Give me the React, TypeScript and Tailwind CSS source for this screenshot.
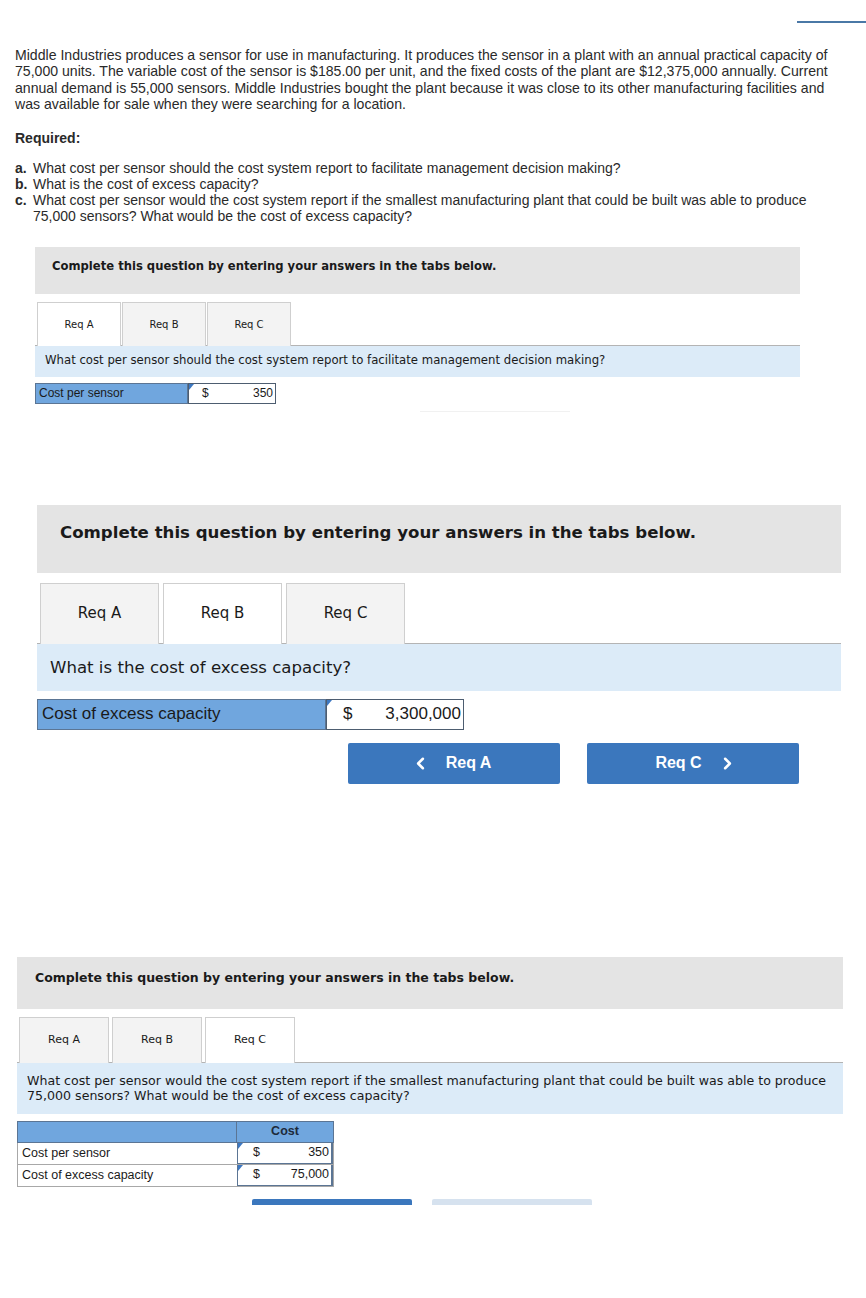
import { ChevronLeft, ChevronRight } from "lucide-react";

const sans = "font-['Liberation_Sans',Arial,sans-serif]";
const verdana = "font-['DejaVu_Sans',Verdana,sans-serif]";

function Marker() {
  return (
    <span className="absolute left-0 top-0 h-0 w-0 border-t-[6px] border-r-[5px] border-t-[#3d78c2] border-r-transparent" />
  );
}

function BlockA() {
  return (
    <section className={`ml-[35px] mt-[23px] w-[765px] ${verdana} text-[#1a1a1a]`}>
      <div className="flex h-[47px] items-center bg-[#e4e4e4] pb-[6px] pl-[17px] text-[11.6px] font-bold">
        Complete this question by entering your answers in the tabs below.
      </div>
      <div className="mt-[8px] flex gap-px border-b border-[#b4b4b4] pl-[2px]">
        {["Req A", "Req B", "Req C"].map((t, i) => (
          <div
            key={t}
            className={`-mb-px flex h-[44px] w-[84px] items-center justify-center border border-b-0 border-[#cfcfcf] text-[10px] ${
              i === 0 ? "bg-white" : "bg-[#f3f3f3]"
            }`}
          >
            {t}
          </div>
        ))}
      </div>
      <div className="flex h-[31px] items-center bg-[#dcebf8] pl-[10px] text-[11.7px]">
        What cost per sensor should the cost system report to facilitate management decision making?
      </div>
      <div className={`mt-[6px] flex h-[21px] w-[241px] ${sans} text-[12px]`}>
        <div className="flex w-[153px] items-center border border-[#5b7594] bg-[#70a6de] pl-[3px]">Cost per sensor</div>
        <div className="relative flex w-[88px] items-center justify-between border border-[#4d5d70] bg-white pl-[13px] pr-[2px]">
          <Marker />
          <span>$</span>
          <span>350</span>
        </div>
      </div>
      <div className="ml-[385px] mt-[7px] h-px w-[150px] bg-[#f1f1f1]" />
    </section>
  );
}

function BlockB() {
  return (
    <section className={`ml-[37px] mt-[93px] w-[804px] ${verdana} text-[#1a1a1a]`}>
      <div className="flex h-[68px] items-center bg-[#e4e4e4] pb-[10px] pl-[23px] text-[16.6px] font-bold">
        Complete this question by entering your answers in the tabs below.
      </div>
      <div className="mt-[10px] flex gap-[4px] border-b border-[#b4b4b4] pl-[3px]">
        {["Req A", "Req B", "Req C"].map((t, i) => (
          <div
            key={t}
            className={`-mb-px flex h-[61px] w-[119px] items-center justify-center border border-b-0 border-[#cfcfcf] text-[15px] ${
              i === 1 ? "bg-white" : "bg-[#f3f3f3]"
            }`}
          >
            {t}
          </div>
        ))}
      </div>
      <div className="flex h-[47px] items-center bg-[#dcebf8] pl-[13px] pt-[2px] text-[16.6px]">
        What is the cost of excess capacity?
      </div>
      <div className={`mt-[8px] flex h-[31px] w-[427px] ${sans} text-[17px]`}>
        <div className="flex w-[289px] items-center border border-[#5b7594] bg-[#70a6de] pl-[4px]">Cost of excess capacity</div>
        <div className="relative flex w-[138px] items-center justify-between border border-[#4d5d70] bg-white pl-[16px] pr-[2px]">
          <Marker />
          <span>$</span>
          <span>3,300,000</span>
        </div>
      </div>
      <div className={`mt-[13px] flex gap-[27px] pl-[311px] ${sans}`}>
        <button className="flex h-[41px] w-[212px] items-center justify-center gap-[16px] rounded-[2px] bg-[#3b77bd] pr-[6px] text-[16px] font-bold text-white">
          <ChevronLeft size={19} strokeWidth={3.2} />
          Req A
        </button>
        <button className="flex h-[41px] w-[212px] items-center justify-center gap-[16px] rounded-[2px] bg-[#3b77bd] pl-[6px] text-[16px] font-bold text-white">
          Req C
          <ChevronRight size={19} strokeWidth={3.2} />
        </button>
      </div>
    </section>
  );
}

function BlockC() {
  return (
    <section className={`ml-[17px] mt-[173px] w-[826px] ${verdana} text-[#1a1a1a]`}>
      <div className="flex h-[52px] items-center bg-[#e4e4e4] pb-[8px] pl-[18px] text-[12.5px] font-bold">
        Complete this question by entering your answers in the tabs below.
      </div>
      <div className="mt-[8px] flex gap-[3px] border-b border-[#b4b4b4] pl-[2px]">
        {["Req A", "Req B", "Req C"].map((t, i) => (
          <div
            key={t}
            className={`-mb-px flex h-[46px] w-[90px] items-center justify-center border border-b-0 border-[#cfcfcf] text-[11px] ${
              i === 2 ? "bg-white" : "bg-[#f3f3f3]"
            }`}
          >
            {t}
          </div>
        ))}
      </div>
      <div className="flex h-[51px] flex-col justify-center bg-[#dcebf8] pl-[10px] text-[12.6px] leading-[15px]">
        <p>What cost per sensor would the cost system report if the smallest manufacturing plant that could be built was able to produce</p>
        <p>75,000 sensors? What would be the cost of excess capacity?</p>
      </div>
      <div className={`mt-[7px] w-[317px] ${sans} text-[12.5px]`}>
        <div className="flex h-[22px] border border-[#5b7594] bg-[#70a6de]">
          <div className="w-[219px] border-r border-[#5b7594]" />
          <div className="flex flex-1 items-center justify-center font-bold text-[#1d2a3a]">Cost</div>
        </div>
        {[
          ["Cost per sensor", "350"],
          ["Cost of excess capacity", "75,000"],
        ].map(([label, value]) => (
          <div key={label} className="flex h-[22px] border border-t-0 border-[#a8a8a8]">
            <div className="flex w-[219px] items-center pl-[4px]">{label}</div>
            <div className="relative flex flex-1 items-center justify-between border-l border-r-2 border-b border-[#5b7594] bg-white pl-[15px] pr-[2px]">
              <Marker />
              <span>$</span>
              <span>{value}</span>
            </div>
          </div>
        ))}
      </div>
      <div className="mt-[12px] flex gap-[20px] pl-[235px]">
        <div className="h-[6px] w-[160px] rounded-t-[2px] bg-[#3b77bd]" />
        <div className="h-[6px] w-[160px] rounded-t-[2px] bg-[#d6e2ef]" />
      </div>
    </section>
  );
}

export default function App() {
  return (
    <div className={`min-h-[1298px] w-[866px] bg-white pb-[90px] ${sans} text-[#2a2a2a]`}>
      <div className="flex justify-end pt-[21px]">
        <div className="h-[2px] w-[69px] bg-[#4a78a6]" />
      </div>
      <p className="mt-[24px] px-[15px] text-[14.1px] leading-[16.4px]">
        Middle Industries produces a sensor for use in manufacturing. It produces the sensor in a plant with an annual practical capacity of
        <br />
        75,000 units. The variable cost of the sensor is $185.00 per unit, and the fixed costs of the plant are $12,375,000 annually. Current
        <br />
        annual demand is 55,000 sensors. Middle Industries bought the plant because it was close to its other manufacturing facilities and
        <br />
        was available for sale when they were searching for a location.
      </p>
      <p className="mt-[17px] px-[15px] text-[14px] font-bold leading-[16px]">Required:</p>
      <ol className="mt-[14px] px-[15px] text-[14px] leading-[16px]">
        <li className="flex">
          <span className="w-[18px] shrink-0 font-bold">a.</span>
          <span>What cost per sensor should the cost system report to facilitate management decision making?</span>
        </li>
        <li className="flex">
          <span className="w-[18px] shrink-0 font-bold">b.</span>
          <span>What is the cost of excess capacity?</span>
        </li>
        <li className="flex">
          <span className="w-[18px] shrink-0 font-bold">c.</span>
          <span>
            What cost per sensor would the cost system report if the smallest manufacturing plant that could be built was able to produce
            <br />
            75,000 sensors? What would be the cost of excess capacity?
          </span>
        </li>
      </ol>
      <BlockA />
      <BlockB />
      <BlockC />
    </div>
  );
}
